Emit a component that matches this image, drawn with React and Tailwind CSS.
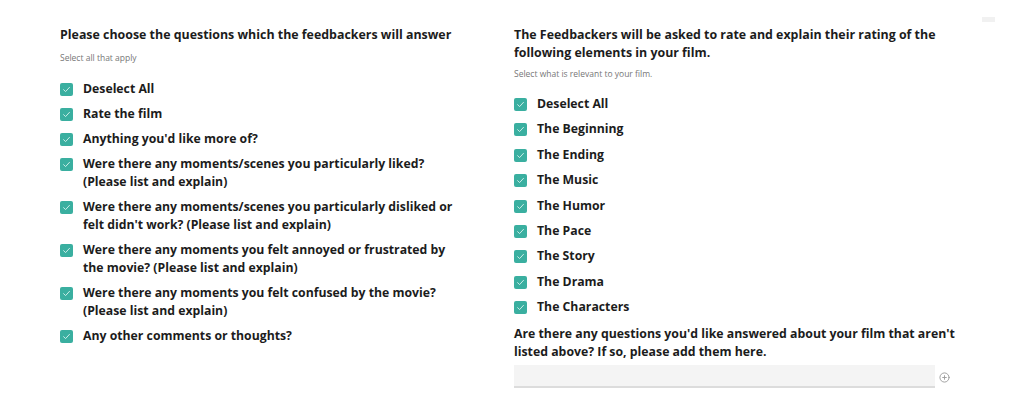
import { PlusCircle } from "lucide-react";

const leftItems = [
  ["Deselect All"],
  ["Rate the film"],
  ["Anything you'd like more of?"],
  ["Were there any moments/scenes you particularly liked?", "(Please list and explain)"],
  ["Were there any moments/scenes you particularly disliked or", "felt didn't work? (Please list and explain)"],
  ["Were there any moments you felt annoyed or frustrated by", "the movie? (Please list and explain)"],
  ["Were there any moments you felt confused by the movie?", "(Please list and explain)"],
  ["Any other comments or thoughts?"],
];

const rightItems = [
  "Deselect All",
  "The Beginning",
  "The Ending",
  "The Music",
  "The Humor",
  "The Pace",
  "The Story",
  "The Drama",
  "The Characters",
];

const Check = () => (
  <span className="mt-[3px] flex h-[13px] w-[13px] shrink-0 items-center justify-center rounded-[2px] bg-[#3aafa0]">
    <svg width="9" height="9" viewBox="0 0 10 10" fill="none">
      <path d="M1.8 5.2 L4 7.3 L8.3 2.6" stroke="#d9f3ef" strokeWidth="1" strokeLinecap="round" strokeLinejoin="round" />
    </svg>
  </span>
);

const Item = ({ lines, lh }) => (
  <li className="flex items-start gap-[10px]">
    <Check />
    <span className={`text-[12.25px] font-bold text-[#1c1c1c] whitespace-nowrap ${lh}`}>
      {lines.map((l, i) => (
        <span key={i} className="block">
          {l}
        </span>
      ))}
    </span>
  </li>
);

export default function App() {
  return (
    <div className="relative min-h-[411px] w-[1024px] bg-white font-['Open_Sans',sans-serif]">
      <div className="absolute right-[29px] top-[17px] h-[5px] w-[13px] bg-[#f1f1f1]" />
      <div className="flex pl-[60px] pt-[26px]">
        <section className="w-[454px]">
          <h2 className="text-[12.4px] font-bold leading-[18px] text-[#1c1c1c] whitespace-nowrap">
            Please choose the questions which the feedbackers will answer
          </h2>
          <p className="mt-[5px] text-[8.5px] leading-[18px] text-[#777]">Select all that apply</p>
          <ul className="mt-[13px] flex flex-col gap-[7px]">
            {leftItems.map((lines, i) => (
              <Item key={i} lines={lines} lh="leading-[18px]" />
            ))}
          </ul>
        </section>
        <section className="w-[440px]">
          <h2 className="text-[12.4px] font-bold leading-[18px] text-[#1c1c1c] whitespace-nowrap">
            The Feedbackers will be asked to rate and explain their rating of the
            <br />
            following elements in your film.
          </h2>
          <p className="mt-[3px] text-[8.5px] leading-[18px] text-[#777]">Select what is relevant to your film.</p>
          <ul className="mt-[12px] flex flex-col gap-[6.9px]">
            {rightItems.map((t) => (
              <Item key={t} lines={[t]} lh="leading-[18.5px]" />
            ))}
          </ul>
          <h3 className="mt-[8px] text-[12.3px] font-bold leading-[18px] text-[#1c1c1c] whitespace-nowrap">
            Are there any questions you'd like answered about your film that aren't
            <br />
            listed above? If so, please add them here.
          </h3>
          <div className="mt-[4px] flex items-center gap-[4px]">
            <input className="h-[23px] w-[421px] border-b-2 border-[#dcdcdc] bg-[#f4f4f4] outline-none" />
            <PlusCircle size={11} strokeWidth={2} className="mt-[2px] text-[#9a9a9a]" />
          </div>
        </section>
      </div>
    </div>
  );
}
